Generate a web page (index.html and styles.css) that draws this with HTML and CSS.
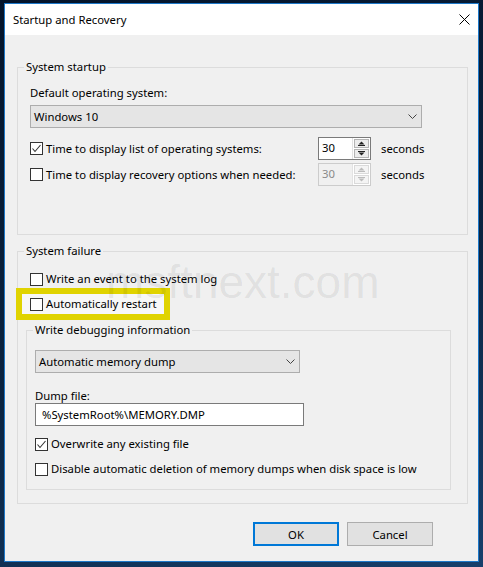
FILE: index.html
```html
<!DOCTYPE html>
<html>
<head>
<meta charset="utf-8">
<title>Startup and Recovery</title>
<link rel="stylesheet" href="styles.css">
</head>
<body>
<div class="window">
  <div class="titlebar">
    <span class="title">Startup and Recovery</span>
    <svg class="close" width="11" height="11" viewBox="0 0 11 11"><path d="M0.5 0.5L10.5 10.5M10.5 0.5L0.5 10.5" stroke="#000" stroke-width="1" fill="none"/></svg>
  </div>
  <div class="content">
    <fieldset class="group">
      <legend>System startup</legend>
      <div class="group-body startup-body">
        <div class="label">Default operating system:</div>
        <div class="select os-select">
          <span>Windows 10</span>
          <svg class="chev" width="9" height="5" viewBox="0 0 9 5"><path d="M0.5 0.5L4.5 4.5L8.5 0.5" stroke="#444" fill="none"/></svg>
        </div>
        <div class="spin-row first-spin">
          <label class="check spin-label"><span class="box"><svg width="11" height="11" viewBox="0 0 11 11"><path d="M1.5 5.5L4 8.5L9.5 2" stroke="#333" stroke-width="1.1" fill="none"/></svg></span>Time to display list of operating systems:</label>
          <div class="spinner">
            <span class="val">30</span>
            <span class="arrows">
              <span class="arrow"><svg width="7" height="5" viewBox="0 0 7 5"><path d="M0.5 3.5L3.5 0.5L6.5 3.5Z" fill="#222"/><path d="M0 4.5H7" stroke="#222" stroke-width="1"/></svg></span>
              <span class="arrow"><svg width="7" height="5" viewBox="0 0 7 5"><path d="M0 0.5H7" stroke="#222" stroke-width="1"/><path d="M0.5 1.5L3.5 4.5L6.5 1.5Z" fill="#222"/></svg></span>
            </span>
          </div>
          <span class="unit">seconds</span>
        </div>
        <div class="spin-row">
          <label class="check spin-label"><span class="box"></span>Time to display recovery options when needed:</label>
          <div class="spinner disabled">
            <span class="val">30</span>
            <span class="arrows">
              <span class="arrow"><svg width="7" height="5" viewBox="0 0 7 5"><path d="M0.5 3.5L3.5 0.5L6.5 3.5Z" fill="#bbb"/><path d="M0 4.5H7" stroke="#bbb" stroke-width="1"/></svg></span>
              <span class="arrow"><svg width="7" height="5" viewBox="0 0 7 5"><path d="M0 0.5H7" stroke="#bbb" stroke-width="1"/><path d="M0.5 1.5L3.5 4.5L6.5 1.5Z" fill="#bbb"/></svg></span>
            </span>
          </div>
          <span class="unit">seconds</span>
        </div>
      </div>
    </fieldset>

    <fieldset class="group failure">
      <legend>System failure</legend>
      <div class="group-body failure-body">
        <label class="check row"><span class="box"></span>Write an event to the system log</label>
        <label class="check row highlight"><span class="box"></span>Automatically restart</label>
        <fieldset class="group debug">
          <legend>Write debugging information</legend>
          <div class="group-body debug-body">
            <div class="select dump-select">
              <span>Automatic memory dump</span>
              <svg class="chev" width="9" height="5" viewBox="0 0 9 5"><path d="M0.5 0.5L4.5 4.5L8.5 0.5" stroke="#444" fill="none"/></svg>
            </div>
            <div class="label dump-label">Dump file:</div>
            <div class="textbox">%SystemRoot%\MEMORY.DMP</div>
            <label class="check row overwrite"><span class="box"><svg width="11" height="11" viewBox="0 0 11 11"><path d="M1.5 5.5L4 8.5L9.5 2" stroke="#333" stroke-width="1.1" fill="none"/></svg></span>Overwrite any existing file</label>
            <label class="check row"><span class="box"></span>Disable automatic deletion of memory dumps when disk space is low</label>
          </div>
        </fieldset>
      </div>
    </fieldset>

    <div class="buttons">
      <span class="btn default">OK</span>
      <span class="btn">Cancel</span>
    </div>
  </div>
  <div class="watermark">msftnext.com</div>
</div>
</body>
</html>
```

FILE: styles.css
```css
* {
  box-sizing: border-box;
}

html, body {
  margin: 0;
  height: 100%;
}

body {
  background: linear-gradient(160deg, #04142a 0%, #0a2340 55%, #173f6b 100%);
  font-family: "Noto Sans", "Open Sans", sans-serif;
  font-size: 11.3px;
  color: #000;
  padding: 3px 0 0 4px;
  overflow: hidden;
}

.window {
  position: relative;
  width: 475px;
  height: 559px;
  border: 1px solid #1d78c9;
  background: #f0f0f0;
  display: flex;
  flex-direction: column;
}

.titlebar {
  height: 31px;
  background: #fff;
  display: flex;
  align-items: center;
  justify-content: space-between;
  padding: 0 8px 0 8px;
  flex: none;
}

.title {
  line-height: 16px;
}

.close {
  display: block;
}

.content {
  position: relative;
  z-index: 1;
  padding: 24px 10px 0 12px;
}

.group {
  margin: 0;
  padding: 0;
  border: 1px solid #dcdcdc;
  min-width: 0;
}

.group legend {
  margin-left: 6px;
  padding: 0 2px;
  line-height: 16px;
}

.label {
  line-height: 16px;
}

.startup-body {
  padding: 10px 0 48px 12px;
}

.select {
  display: flex;
  align-items: center;
  justify-content: space-between;
  height: 23px;
  background: #e5e5e5;
  border: 1px solid #adadad;
  padding: 0 4px 0 3px;
}

.chev {
  display: block;
}

.os-select {
  width: 392px;
  margin-top: 4px;
}

.spin-row {
  display: flex;
  align-items: center;
  height: 23px;
  margin-top: 3px;
}

.spin-row.first-spin {
  margin-top: 9px;
}

.check {
  display: flex;
  align-items: center;
  line-height: 16px;
  white-space: nowrap;
}

.box {
  width: 13px;
  height: 13px;
  border: 1px solid #333;
  background: #fff;
  margin-right: 3px;
  flex: none;
  display: flex;
  align-items: center;
  justify-content: center;
}

.box svg {
  display: block;
}

.spin-label {
  width: 288px;
  flex: none;
}

.spinner {
  width: 53px;
  height: 23px;
  display: flex;
  border: 1px solid #7a7a7a;
  background: #fff;
  flex: none;
}

.spinner .val {
  flex: 1;
  padding-left: 3px;
  line-height: 20px;
}

.arrows {
  width: 18px;
  display: flex;
  flex-direction: column;
  gap: 1px;
  padding: 1px;
  background: #fff;
  border-left: 1px solid #e3e3e3;
}

.arrow {
  flex: 1;
  background: #ececec;
  border: 1px solid #b4b4b4;
  display: flex;
  align-items: center;
  justify-content: center;
}

.arrow svg {
  display: block;
}

.spinner.disabled {
  border-color: #cccccc;
  background: #fff;
}

.spinner.disabled .val {
  color: #8a8a8a;
  background: #f0f0f0;
}

.spinner.disabled .arrows {
  background: #fff;
}

.spinner.disabled .arrow {
  background: #f4f4f4;
  border-color: #dadada;
}

.unit {
  margin-left: 10px;
}

.failure {
  margin-top: 8px;
}

.failure-body {
  padding: 12px 16px 13px 12px;
}

.row {
  width: fit-content;
}

.row + .row {
  margin-top: 9px;
}

.row.highlight {
  margin: 7px -7px -2px -8px;
  padding: 2px 7px 2px 8px;
  outline: 6px solid #e0d300;
  background: #f7f7f7;
}

.debug {
  margin: 10px 0 0 -4px;
}

.debug-body {
  padding: 12px 0 12px 8px;
}

.dump-select {
  width: 265px;
}

.dump-label {
  margin-top: 15px;
  line-height: 15px;
}

.textbox {
  width: 269px;
  height: 23px;
  border: 1px solid #7a7a7a;
  background: #fff;
  padding-left: 6px;
  line-height: 21px;
}

.row.overwrite {
  margin-top: 10px;
}

.buttons {
  display: flex;
  justify-content: flex-end;
  gap: 8px;
  margin: 18px 35px 0 0;
}

.btn {
  width: 86px;
  height: 24px;
  background: #e1e1e1;
  border: 1px solid #adadad;
  display: flex;
  align-items: center;
  justify-content: center;
}

.btn.default {
  border: 2px solid #0078d7;
}

.watermark {
  position: absolute;
  left: 101px;
  top: 255px;
  font-family: "Liberation Sans", Arial, sans-serif;
  font-size: 46px;
  line-height: 46px;
  color: rgba(0, 0, 0, 0.075);
  pointer-events: none;
  z-index: 2;
  white-space: nowrap;
}
```
